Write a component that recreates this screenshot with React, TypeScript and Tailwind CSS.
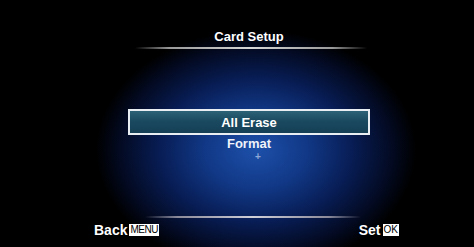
export default function App() {
  return (
    <div
      className="w-[474px] h-[247px] overflow-hidden flex flex-col bg-black bg-[radial-gradient(ellipse_160px_120px_at_256px_150px,#1d50aa_0%,#113886_32%,#081d55_60%,#030a22_85%,#000_100%)] text-white font-bold"
      style={{ fontFamily: '"Liberation Sans", Arial, sans-serif' }}
    >
      <div className="ml-[128px] w-[242px] flex flex-col items-center">
        <div className="mt-[28px] text-[13px] leading-[17px]">Card Setup</div>
        <div className="mt-[2px] ml-[4px] w-[232px] h-[2px] bg-[linear-gradient(90deg,transparent,#9a9a9a_15%,#d8d8d8_50%,#9a9a9a_85%,transparent)]" />

        <div className="mt-[60px] w-[242px] h-[26px] border-2 border-[#e8eef2] bg-[linear-gradient(180deg,#2c6277_0%,#1a4a60_45%,#153f55_100%)] flex items-center justify-center text-[13px] leading-none">
          All Erase
        </div>
        <div className="mt-[1px] text-[13px] leading-[16px] text-[#eef2fa]">Format</div>
        <div className="ml-[18px] text-[10px] leading-[10px] text-[#8fa8d8]">+</div>

        <div className="mt-[54px] ml-[8px] w-[216px] h-[2px] bg-[linear-gradient(90deg,transparent,#8a8a9a_15%,#cfcfd8_50%,#8a8a9a_85%,transparent)]" />
      </div>

      <div className="mt-[4px] ml-[94px] w-[305px] flex items-center justify-between text-[14px] leading-[16px]">
        <div className="flex items-center gap-[2px]">
          <span>Back</span>
          <span className="bg-white text-black font-normal text-[10px] leading-[12px] px-[1px] tracking-[-0.5px]">MENU</span>
        </div>
        <div className="flex items-center gap-[2px]">
          <span>Set</span>
          <span className="bg-white text-black font-normal text-[10px] leading-[12px] px-[1px]">OK</span>
        </div>
      </div>
    </div>
  )
}
